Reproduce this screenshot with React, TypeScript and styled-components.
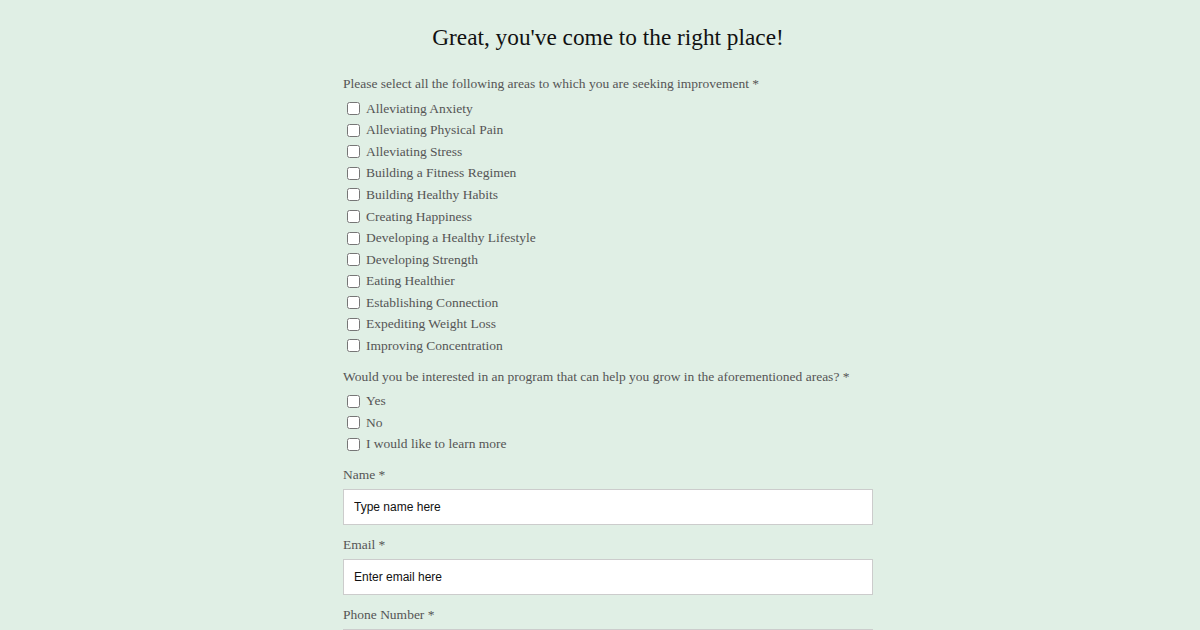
import React from "react";
import styled, { createGlobalStyle } from "styled-components";

const GlobalStyle = createGlobalStyle`
  html, body {
    margin: 0;
    padding: 0;
    background: #e0efe5;
  }
  body {
    font-family: "Liberation Serif", "Times New Roman", serif;
  }
`;

const Page = styled.div`
  width: 530px;
  margin: 0 auto;
  padding: 20px 0 0 16px;
  display: flex;
  flex-direction: column;
`;

const Title = styled.h1`
  margin: 0 0 20px;
  font-size: 23.3px;
  line-height: 34px;
  font-weight: 400;
  color: #111;
  text-align: center;
`;

const Group = styled.div`
  display: flex;
  flex-direction: column;
  margin-bottom: 10px;
`;

const Label = styled.div`
  font-size: 13.5px;
  line-height: 20px;
  color: #555;
  margin-bottom: 4px;
`;

const Row = styled.label`
  display: flex;
  align-items: center;
  height: 21.55px;
  font-size: 13.5px;
  color: #555;
`;

const Box = styled.input`
  width: 13px;
  height: 13px;
  margin: 0 6px 0 4px;
`;

const TextInput = styled.input`
  box-sizing: border-box;
  width: 530px;
  height: 36px;
  border: 1px solid #ccc;
  background: #fff;
  padding: 0 10px;
  font-family: "Liberation Sans", Arial, sans-serif;
  font-size: 12px;
  color: #111;
  outline: none;
  &::placeholder {
    color: #111;
    opacity: 1;
  }
`;

const areas = [
  "Alleviating Anxiety",
  "Alleviating Physical Pain",
  "Alleviating Stress",
  "Building a Fitness Regimen",
  "Building Healthy Habits",
  "Creating Happiness",
  "Developing a Healthy Lifestyle",
  "Developing Strength",
  "Eating Healthier",
  "Establishing Connection",
  "Expediting Weight Loss",
  "Improving Concentration",
];

const interest = ["Yes", "No", "I would like to learn more"];

export default function App() {
  return (
    <>
      <GlobalStyle />
      <Page>
        <Title>Great, you've come to the right place!</Title>
        <Group>
          <Label>Please select all the following areas to which you are seeking improvement *</Label>
          {areas.map((a) => (
            <Row key={a}>
              <Box type="checkbox" />
              {a}
            </Row>
          ))}
        </Group>
        <Group>
          <Label>Would you be interested in an program that can help you grow in the aforementioned areas? *</Label>
          {interest.map((a) => (
            <Row key={a}>
              <Box type="checkbox" />
              {a}
            </Row>
          ))}
        </Group>
        <Group>
          <Label>Name *</Label>
          <TextInput placeholder="Type name here" />
        </Group>
        <Group>
          <Label>Email *</Label>
          <TextInput placeholder="Enter email here" />
        </Group>
        <Group>
          <Label>Phone Number *</Label>
          <TextInput placeholder="Enter phone number here" />
        </Group>
      </Page>
    </>
  );
}
